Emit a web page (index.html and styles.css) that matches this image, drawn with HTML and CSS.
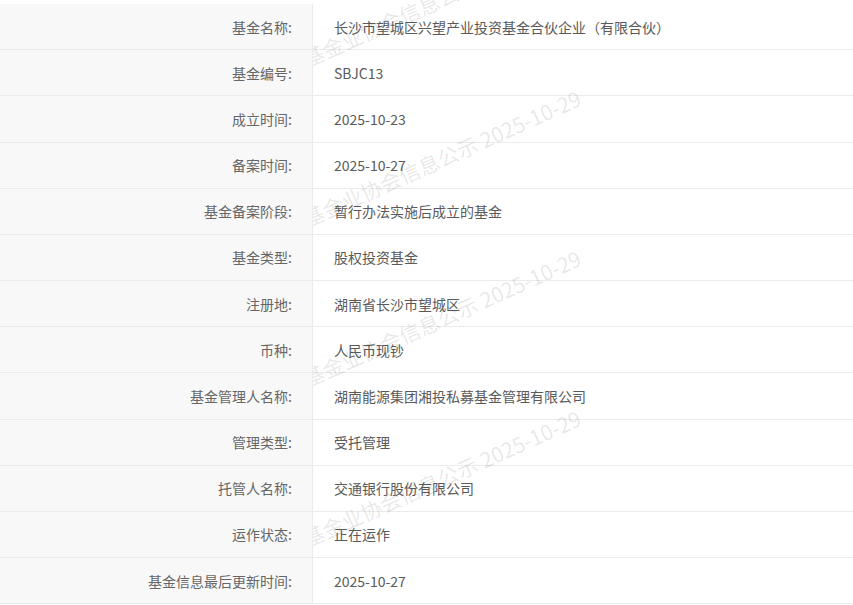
FILE: index.html
```html
<!DOCTYPE html>
<html>
<head>
	<meta charset="utf-8">
	<title>基金信息</title>
	<link rel="stylesheet" href="styles.css">
</head>
<body>
	<div class="info">
		<div class="row"><div class="label">基金名称:</div><div class="value">长沙市望城区兴望产业投资基金合伙企业（有限合伙）</div></div>
		<div class="row"><div class="label">基金编号:</div><div class="value">SBJC13</div></div>
		<div class="row"><div class="label">成立时间:</div><div class="value">2025-10-23</div></div>
		<div class="row"><div class="label">备案时间:</div><div class="value">2025-10-27</div></div>
		<div class="row"><div class="label">基金备案阶段:</div><div class="value">暂行办法实施后成立的基金</div></div>
		<div class="row"><div class="label">基金类型:</div><div class="value">股权投资基金</div></div>
		<div class="row"><div class="label">注册地:</div><div class="value">湖南省长沙市望城区</div></div>
		<div class="row"><div class="label">币种:</div><div class="value">人民币现钞</div></div>
		<div class="row"><div class="label">基金管理人名称:</div><div class="value">湖南能源集团湘投私募基金管理有限公司</div></div>
		<div class="row"><div class="label">管理类型:</div><div class="value">受托管理</div></div>
		<div class="row"><div class="label">托管人名称:</div><div class="value">交通银行股份有限公司</div></div>
		<div class="row"><div class="label">运作状态:</div><div class="value">正在运作</div></div>
		<div class="row"><div class="label">基金信息最后更新时间:</div><div class="value">2025-10-27</div></div>

		<!-- 水印 -->
		<div class="marks">
			<span class="mark m1">基金业协会信息公示 2025-10-29</span>
			<span class="mark m2">基金业协会信息公示 2025-10-29</span>
			<span class="mark m3">基金业协会信息公示 2025-10-29</span>
			<span class="mark m4">基金业协会信息公示 2025-10-29</span>
		</div>
	</div>
</body>
</html>
```

FILE: styles.css
```css
*{
	margin: 0;
	padding: 0;
	box-sizing: border-box;
}
body{
	background: #fff;
	font-family: "Microsoft YaHei", "Noto Sans CJK SC", sans-serif;
	font-size: 14px;
	color: #666;
}
.info{
	position: relative;
	padding-top: 4px;
	overflow: hidden;
}
.row{
	display: grid;
	grid-template-columns: 313px 1fr;
	height: 46.18px;
	border-bottom: 1px solid #ebebeb;
}
.label{
	background: #f8f8f8;
	border-right: 1px solid #ebebeb;
	text-align: right;
	padding-right: 20px;
	display: flex;
	align-items: center;
	justify-content: flex-end;
}
.value{
	padding-left: 21px;
	display: flex;
	align-items: center;
	color: #5a5a5a;
}
.marks{
	position: absolute;
	left: 313px;
	top: 0;
	right: 0;
	bottom: 0;
	overflow: hidden;
	pointer-events: none;
}
.mark{
	position: absolute;
	left: -3px;
	white-space: nowrap;
	font-size: 21px;
	color: rgba(0, 0, 0, 0.1);
	transform-origin: 0 100%;
	transform: rotate(-24deg);
}
.m1{ top: 43px; }
.m2{ top: 203px; }
.m3{ top: 363px; }
.m4{ top: 523px; }
```
